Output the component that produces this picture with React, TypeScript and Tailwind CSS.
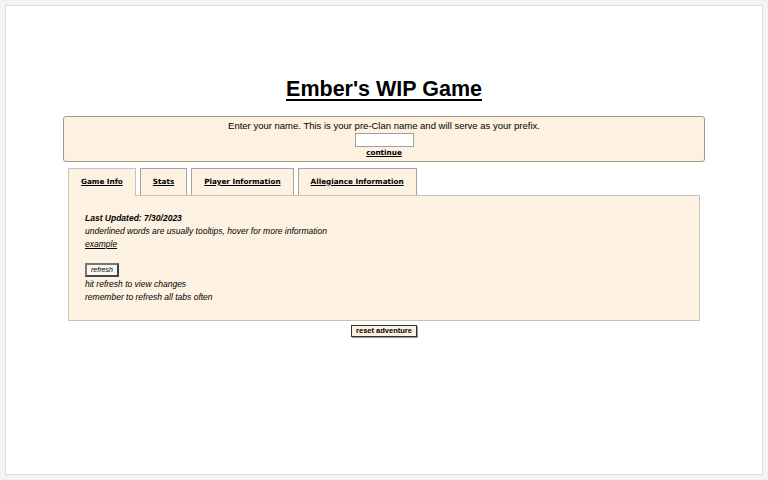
import { useState } from "react";

const tabs = ["Game Info", "Stats", "Player Information", "Allegiance Information"];

export default function App() {
  const [active, setActive] = useState(0);
  const [name, setName] = useState("");

  return (
    <div className="min-h-screen bg-[#f3f3f3] p-[5px] font-['Liberation_Sans',Arial,sans-serif] text-black">
      <div className="h-[470px] border border-[#dcdcdc] bg-white pt-[71px]">
        <h1 className="text-center text-[21.5px] font-bold leading-[25px] underline underline-offset-[3px]">
          Ember's WIP Game
        </h1>

        <div className="mx-[57px] mt-[14px] flex h-[46px] flex-col items-center rounded-[3px] border border-[#a39787] bg-[#fdf1e0] pt-[3px]">
          <p className="text-[9.5px] leading-[12px]">
            Enter your name. This is your pre-Clan name and will serve as your prefix.
          </p>
          <input
            value={name}
            onChange={(e) => setName(e.target.value)}
            className="mt-px h-[14px] w-[59px] border border-[#a0a0a0] bg-white text-[9px] outline-none"
          />
          <button className="mt-[1px] font-['DejaVu_Sans',sans-serif] text-[7.25px] font-bold leading-[10px] underline">
            continue
          </button>
        </div>

        <div className="mx-[62px] mt-[6px]">
          <div className="flex gap-[4px]">
            {tabs.map((t, i) => (
              <button
                key={t}
                onClick={() => setActive(i)}
                className={
                  i === active
                    ? "relative z-10 -mb-px h-[28px] border border-b-0 border-[#c8c2b8] bg-[#fdf2e1] px-[12px] font-['DejaVu_Sans',sans-serif] text-[7.25px] font-bold underline"
                    : "h-[27px] border border-b-0 border-[#a8a29a] bg-[#fdf2e1] px-[12px] font-['DejaVu_Sans',sans-serif] text-[7.25px] font-bold underline"
                }
              >
                {t}
              </button>
            ))}
          </div>
          <div className="h-[126px] border border-[#c8c2b8] bg-[#fdf2e1] px-[16px] pt-[16px] text-[8.5px] italic leading-[13px]">
            <p className="font-bold">Last Updated: 7/30/2023</p>
            <p>underlined words are usually tooltips, hover for more information</p>
            <p className="underline">example</p>
            <button className="mt-[12px] h-[14px] border-2 border-[#777] border-r-[#444] border-b-[#444] bg-[#f9f6f0] px-[4px] text-[7px] italic leading-[10px]">
              refresh
            </button>
            <p className="mt-[1px]">hit refresh to view changes</p>
            <p>remember to refresh all tabs often</p>
          </div>
        </div>

        <div className="mt-[4px] flex justify-center">
          <button className="h-[12px] border border-[#333] bg-[#fdf2e1] px-[4px] text-[7.5px] font-bold leading-[10px] shadow-[1px_1px_0_#999]">
            reset adventure
          </button>
        </div>
      </div>
    </div>
  );
}
